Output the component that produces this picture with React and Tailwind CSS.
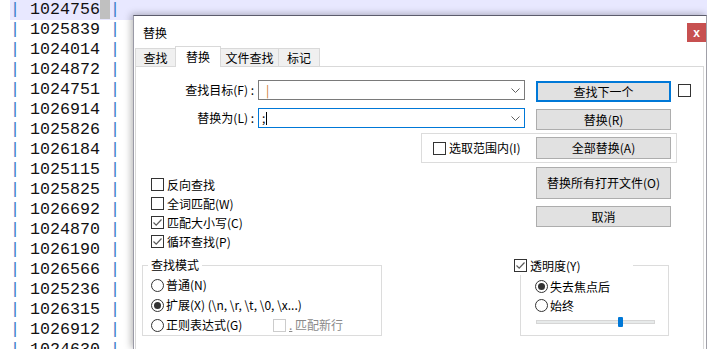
import React from "react";

const lines = [
  "1024756", "1025839", "1024014", "1024872", "1024751", "1026914",
  "1025826", "1026184", "1025115", "1025825", "1026692", "1024870",
  "1026190", "1026566", "1025236", "1026315", "1026912", "1024630",
];

function Checkbox({ checked, disabled }) {
  return (
    <span
      className={
        disabled
          ? "inline-flex h-[13px] w-[13px] shrink-0 items-center justify-center border border-[#cccccc] bg-white"
          : "inline-flex h-[13px] w-[13px] shrink-0 items-center justify-center border border-[#333333] bg-white"
      }
    >
      {checked && (
        <svg width="11" height="11" viewBox="0 0 11 11">
          <path d="M1.5 5.5 L4.2 8.2 L9.5 2.5" fill="none" stroke="#5a5a5a" strokeWidth="1.2" />
        </svg>
      )}
    </span>
  );
}

function Radio({ checked }) {
  return (
    <span className="inline-flex h-[13px] w-[13px] shrink-0 items-center justify-center rounded-full border border-[#333333] bg-white">
      {checked && <span className="h-[7px] w-[7px] rounded-full bg-[#333333]" />}
    </span>
  );
}

function Chevron() {
  return (
    <svg width="9" height="5" viewBox="0 0 9 5" className="shrink-0">
      <polyline points="0.5,0.5 4.5,4.5 8.5,0.5" fill="none" stroke="#606060" strokeWidth="1" />
    </svg>
  );
}

export default function App() {
  return (
    <div className="relative h-[349px] w-[707px] overflow-hidden bg-white">
      {/* editor */}
      <div className="font-['Liberation_Mono',monospace] text-[16.67px] leading-[20px] text-[#111111]">
        {lines.map((n, i) => (
          <div key={i} className="flex h-[20px] pl-[10px]">
            <div className={i === 0 ? "flex-1 whitespace-pre bg-[#e8e8ff]" : "flex-1 whitespace-pre"}>
              <span className="text-[#3a7cc7]">|</span>
              {" "}
              {n}
              {i === 0 ? <span className="bg-[#c0c0c0]"> </span> : " "}
              <span className="text-[#3a7cc7]">|</span>
            </div>
          </div>
        ))}
      </div>

      {/* dialog window */}
      <div className="absolute left-[133px] top-[15px] h-[334px] w-[574px] border-l border-r border-t border-l-[#9a9aa6] border-r-[#a0a0a8] border-t-[#5c5c6c] bg-white font-['Noto_Sans_CJK_SC',sans-serif] text-[12px] leading-[16px] text-black shadow-[-2px_-1px_7px_rgba(0,0,0,0.28)]">
        {/* title bar */}
        <div className="flex h-[30px] items-start justify-between">
          <div className="pl-[9px] pt-[9px]">替换</div>
          <div className="mt-[7px] flex h-[19px] w-[19px] items-center justify-center bg-[#c75050] font-['Liberation_Sans',sans-serif] text-[12px] font-bold leading-none text-white">
            x
          </div>
        </div>

        {/* tabs */}
        <div className="relative z-10 flex h-[20px] items-end pl-px">
          <div className="flex h-[18px] w-[41px] items-center justify-center border border-b-0 border-[#d9d9d9] bg-[#f0f0f0]">查找</div>
          <div className="-mb-px -ml-px flex h-[21px] w-[46px] items-center justify-center border border-b-0 border-[#d9d9d9] bg-white">替换</div>
          <div className="-ml-px flex h-[18px] w-[59px] items-center justify-center border border-b-0 border-[#d9d9d9] bg-[#f0f0f0]">文件查找</div>
          <div className="-ml-px flex h-[18px] w-[42px] items-center justify-center border border-b-0 border-[#d9d9d9] bg-[#f0f0f0]">标记</div>
        </div>

        {/* panel */}
        <div className="ml-px h-[300px] w-[569px] border border-[#d9d9d9] pt-[13px]">
          {/* row 1 */}
          <div className="flex items-start">
            <div className="w-[118px] text-right leading-[20px]">查找目标(F) :</div>
            <div className="ml-[4px] flex h-[20px] w-[267px] items-center justify-between border border-[#7a7a7a] pl-[3px] pr-[4px]">
              <span className="ml-[4px] text-[#c8782a]">|</span>
              <Chevron />
            </div>
            <div className="ml-[11px] mt-px flex h-[21px] w-[135px] items-center justify-center border-2 border-[#0078d7] bg-[#e1e1e1]">
              查找下一个
            </div>
            <div className="ml-[7px] mt-[4px]">
              <Checkbox />
            </div>
          </div>

          {/* row 2 */}
          <div className="mt-[6px] flex items-start">
            <div className="w-[118px] text-right leading-[20px]">替换为(L) :</div>
            <div className="ml-[4px] flex h-[20px] w-[267px] items-center justify-between border border-[#0078d7] pl-[3px] pr-[4px]">
              <span className="flex items-center">
                ;<span className="ml-px inline-block h-[13px] w-px bg-black" />
              </span>
              <Chevron />
            </div>
            <div className="ml-[11px] mt-px flex h-[21px] w-[135px] items-center justify-center border border-[#adadad] bg-[#e1e1e1]">
              替换(R)
            </div>
          </div>

          {/* lower area */}
          <div className="mt-[3px] flex">
            {/* left column */}
            <div className="w-[285px] pt-[42px]">
              <div className="pl-[15px]">
                <div className="flex h-[19px] items-center gap-[3px]">
                  <Checkbox />
                  <span>反向查找</span>
                </div>
                <div className="flex h-[19px] items-center gap-[3px]">
                  <Checkbox />
                  <span>全词匹配(W)</span>
                </div>
                <div className="flex h-[19px] items-center gap-[3px]">
                  <Checkbox checked />
                  <span>匹配大小写(C)</span>
                </div>
                <div className="flex h-[19px] items-center gap-[3px]">
                  <Checkbox checked />
                  <span>循环查找(P)</span>
                </div>
              </div>

              <fieldset className="ml-[6px] mt-[6px] w-[240px] border border-[#dcdcdc] px-[5px] pb-0">
                <legend className="px-[3px] leading-[16px]">查找模式</legend>
                <div className="mt-[2px] pl-[3px]">
                  <div className="flex h-[20px] items-center gap-[2px]">
                    <Radio />
                    <span>普通(N)</span>
                  </div>
                  <div className="flex h-[20px] items-center gap-[2px]">
                    <Radio checked />
                    <span>扩展(X) (\n, \r, \t, \0, \x...)</span>
                  </div>
                  <div className="flex h-[20px] items-center">
                    <div className="flex w-[122px] items-center gap-[2px]">
                      <Radio />
                      <span>正则表达式(G)</span>
                    </div>
                    <Checkbox disabled />
                    <span className="ml-[3px] text-[#8a8a8a]">
                      <span className="underline">.</span> 匹配新行
                    </span>
                  </div>
                </div>
              </fieldset>
            </div>

            {/* right column */}
            <div className="w-[256px]">
              <div className="flex h-[30px] w-[256px] items-center border border-[#dcdcdc] pl-[11px] pr-[5px]">
                <Checkbox />
                <span className="ml-[3px]">选取范围内(I)</span>
                <div className="ml-auto flex h-[22px] w-[135px] items-center justify-center border border-[#adadad] bg-[#e1e1e1]">
                  全部替换(A)
                </div>
              </div>
              <div className="ml-[115px] mt-[4px] flex h-[32px] w-[135px] items-center justify-center border border-[#adadad] bg-[#e1e1e1]">
                替换所有打开文件(O)
              </div>
              <div className="ml-[115px] mt-[7px] flex h-[21px] w-[135px] items-center justify-center border border-[#adadad] bg-[#e1e1e1]">
                取消
              </div>

              <fieldset className="ml-[99px] mt-[29px] w-[149px] border border-[#dcdcdc] pb-[11px] pl-[14px]">
                <legend className="-ml-[21px] flex h-[19px] w-[119px] items-center gap-[3px] bg-white p-0">
                  <Checkbox checked />
                  <span>透明度(Y)</span>
                </legend>
                <div className="mt-[2px]">
                  <div className="flex h-[19px] items-center gap-[2px]">
                    <Radio checked />
                    <span>失去焦点后</span>
                  </div>
                  <div className="flex h-[19px] items-center gap-[2px]">
                    <Radio />
                    <span>始终</span>
                  </div>
                  <div className="relative ml-px mt-[5px] h-[4px] w-[119px] border border-[#d6d6d6] bg-[#e7eaea]">
                    <div className="absolute left-[81px] top-[-4px] h-[10px] w-[5px] rounded-[1px] bg-[#0078d7]" />
                  </div>
                </div>
              </fieldset>
            </div>
          </div>
        </div>
      </div>
    </div>
  );
}
